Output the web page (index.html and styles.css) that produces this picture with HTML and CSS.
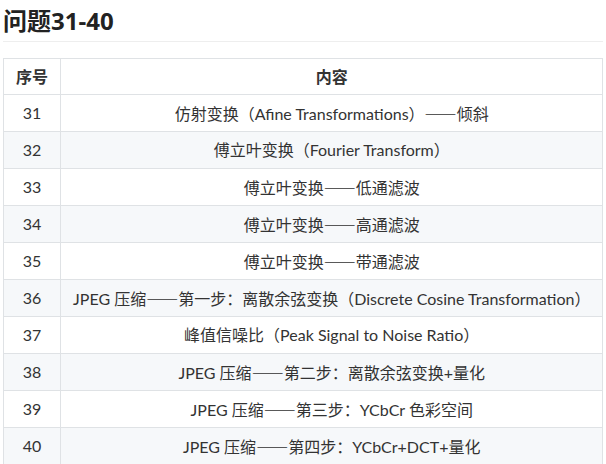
FILE: index.html
```html
<!DOCTYPE html>
<html lang="zh">
<head>
<meta charset="utf-8">
<link rel="stylesheet" href="styles.css">
</head>
<body>
<h2 class="title">问题31-40</h2>
<table class="qtable">
<thead>
<tr><th class="num">序号</th><th>内容</th></tr>
</thead>
<tbody>
<tr><td class="num">31</td><td>仿射变换（Afine Transformations）<span class="dash">——</span>倾斜</td></tr>
<tr><td class="num">32</td><td>傅立叶变换（Fourier Transform）</td></tr>
<tr><td class="num">33</td><td>傅立叶变换<span class="dash">——</span>低通滤波</td></tr>
<tr><td class="num">34</td><td>傅立叶变换<span class="dash">——</span>高通滤波</td></tr>
<tr><td class="num">35</td><td>傅立叶变换<span class="dash">——</span>带通滤波</td></tr>
<tr><td class="num">36</td><td>JPEG 压缩<span class="dash">——</span>第一步：离散余弦变换（Discrete Cosine Transformation）</td></tr>
<tr><td class="num">37</td><td>峰值信噪比（Peak Signal to Noise Ratio）</td></tr>
<tr><td class="num">38</td><td>JPEG 压缩<span class="dash">——</span>第二步：离散余弦变换+量化</td></tr>
<tr><td class="num">39</td><td>JPEG 压缩<span class="dash">——</span>第三步：YCbCr 色彩空间</td></tr>
<tr><td class="num">40</td><td>JPEG 压缩<span class="dash">——</span>第四步：YCbCr+DCT+量化</td></tr>
</tbody>
</table>
</body>
</html>
```
FILE: styles.css
```css
html, body {
  margin: 0;
  padding: 0;
  background: #fff;
}
body {
  padding: 0 3px;
  font-family: "Lato", "Noto Sans CJK SC", sans-serif;
  color: #333;
}
.title {
  margin: 0;
  padding: 6px 0 5px;
  font-family: "Open Sans", "Noto Sans CJK SC", sans-serif;
  font-size: 24px;
  line-height: 30px;
  font-weight: 700;
  color: #222;
  border-bottom: 1px solid #eee;
}
.qtable {
  margin-top: 16px;
  width: 600px;
  border-collapse: collapse;
  font-size: 16px;
}
.qtable th, .qtable td {
  border: 1px solid #dfe2e5;
  padding: 6px 12px;
  height: 24px;
  line-height: 22px;
  text-align: center;
  white-space: nowrap;
}
.qtable th {
  font-weight: 700;
  padding-bottom: 5px;
}
.qtable th.num, .qtable td.num {
  width: 33px;
}
.qtable tbody tr:nth-child(2n) {
  background: #f6f8fa;
}
.dash {
  font-family: "Noto Sans CJK SC", sans-serif;
}
```
